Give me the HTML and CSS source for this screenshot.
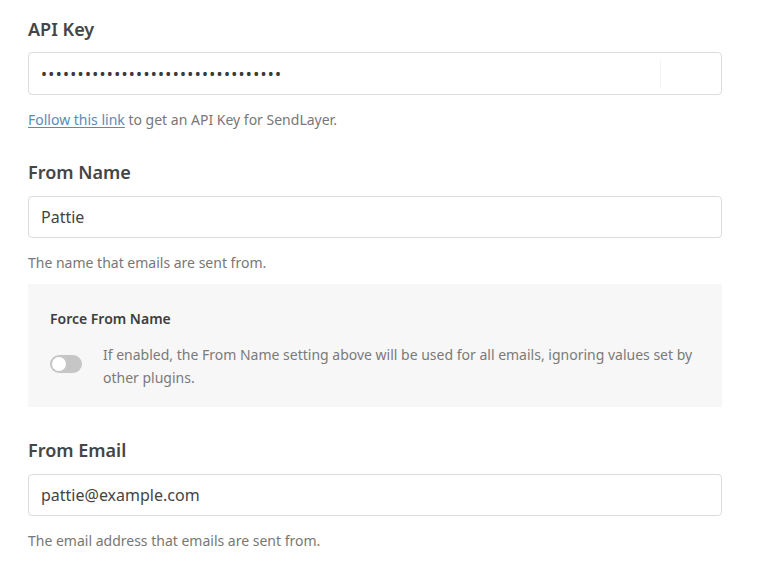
FILE: index.html
```html
<!DOCTYPE html>
<html lang="en">
<head>
<meta charset="utf-8">
<title>SendLayer settings</title>
<link rel="stylesheet" href="styles.css">
</head>
<body>
<main class="settings">
  <section class="field field-first">
    <h2 class="field-label">API Key</h2>
    <div class="input-wrap input-wrap-key">
      <input class="text-input password" type="password" value="pattiesecretapikeyvalue1234567890" aria-label="API Key">
      <span class="input-addon"></span>
    </div>
    <p class="help"><a href="#" class="help-link">Follow this link</a> to get an API Key for SendLayer.</p>
  </section>

  <section class="field">
    <h2 class="field-label">From Name</h2>
    <div class="input-wrap">
      <input class="text-input" type="text" value="Pattie" aria-label="From Name">
    </div>
    <p class="help">The name that emails are sent from.</p>
  </section>

  <section class="option-box">
    <h3 class="option-title">Force From Name</h3>
    <div class="option-row">
      <span class="toggle"><span class="toggle-knob"></span></span>
      <p class="option-desc">If enabled, the From Name setting above will be used for all emails, ignoring values set by other plugins.</p>
    </div>
  </section>

  <section class="field field-after-box">
    <h2 class="field-label">From Email</h2>
    <div class="input-wrap">
      <input class="text-input" type="text" value="pattie@example.com" aria-label="From Email">
    </div>
    <p class="help">The email address that emails are sent from.</p>
  </section>
</main>
</body>
</html>
```

FILE: styles.css
```css
* {
  box-sizing: border-box;
}

html, body {
  margin: 0;
  padding: 0;
  background: #ffffff;
}

body {
  font-family: "Noto Sans", "Open Sans", sans-serif;
  color: #444444;
}

.settings {
  width: 694px;
  margin-left: 28px;
  padding-top: 17px;
  display: flex;
  flex-direction: column;
}

.field {
  display: flex;
  flex-direction: column;
  margin-top: 30px;
}

.field-first {
  margin-top: 0;
}

.field-after-box {
  margin-top: 31px;
}

.field-label {
  margin: 0;
  font-size: 18px;
  line-height: 24px;
  font-weight: 600;
  color: #454545;
}

.input-wrap {
  margin-top: 12px;
  height: 42px;
  border: 1px solid #dcdcdc;
  border-radius: 4px;
  background: #ffffff;
  display: flex;
  align-items: stretch;
}

.input-wrap-key {
  margin-top: 11px;
  height: 43px;
}

.text-input {
  flex: 1;
  min-width: 0;
  border: 0;
  outline: none;
  background: transparent;
  padding: 0 12px 0 12px;
  font-family: "Noto Sans", "Open Sans", sans-serif;
  font-size: 16px;
  color: #444444;
}

.password {
  font-size: 16px;
  letter-spacing: 1.3px;
  color: #3a3a3a;
}

.input-addon {
  width: 61px;
  margin: 6px 0;
  border-left: 1px solid #f4f4f4;
}

.help {
  margin: 15px 0 0 0;
  font-size: 14px;
  line-height: 20px;
  color: #777777;
}

.help-link {
  color: #5b8bb5;
  text-decoration: underline;
  text-underline-offset: 2px;
}

.option-box {
  margin-top: 11px;
  background: #f7f7f7;
  padding: 25px 22px 18px 22px;
  display: flex;
  flex-direction: column;
}

.option-title {
  margin: 0;
  font-size: 14px;
  line-height: 20px;
  font-weight: 600;
  color: #3d3d3d;
}

.option-row {
  margin-top: 14px;
  display: flex;
  align-items: flex-start;
  gap: 21px;
}

.toggle {
  flex: none;
  margin-top: 12px;
  width: 32px;
  height: 18px;
  border-radius: 9px;
  background: #c6c6c6;
  display: flex;
  align-items: center;
  padding: 0 2px;
}

.toggle-knob {
  width: 14px;
  height: 14px;
  border-radius: 50%;
  background: #ffffff;
}

.option-desc {
  margin: 0;
  font-size: 14px;
  line-height: 23px;
  color: #7a7a7a;
}
```
